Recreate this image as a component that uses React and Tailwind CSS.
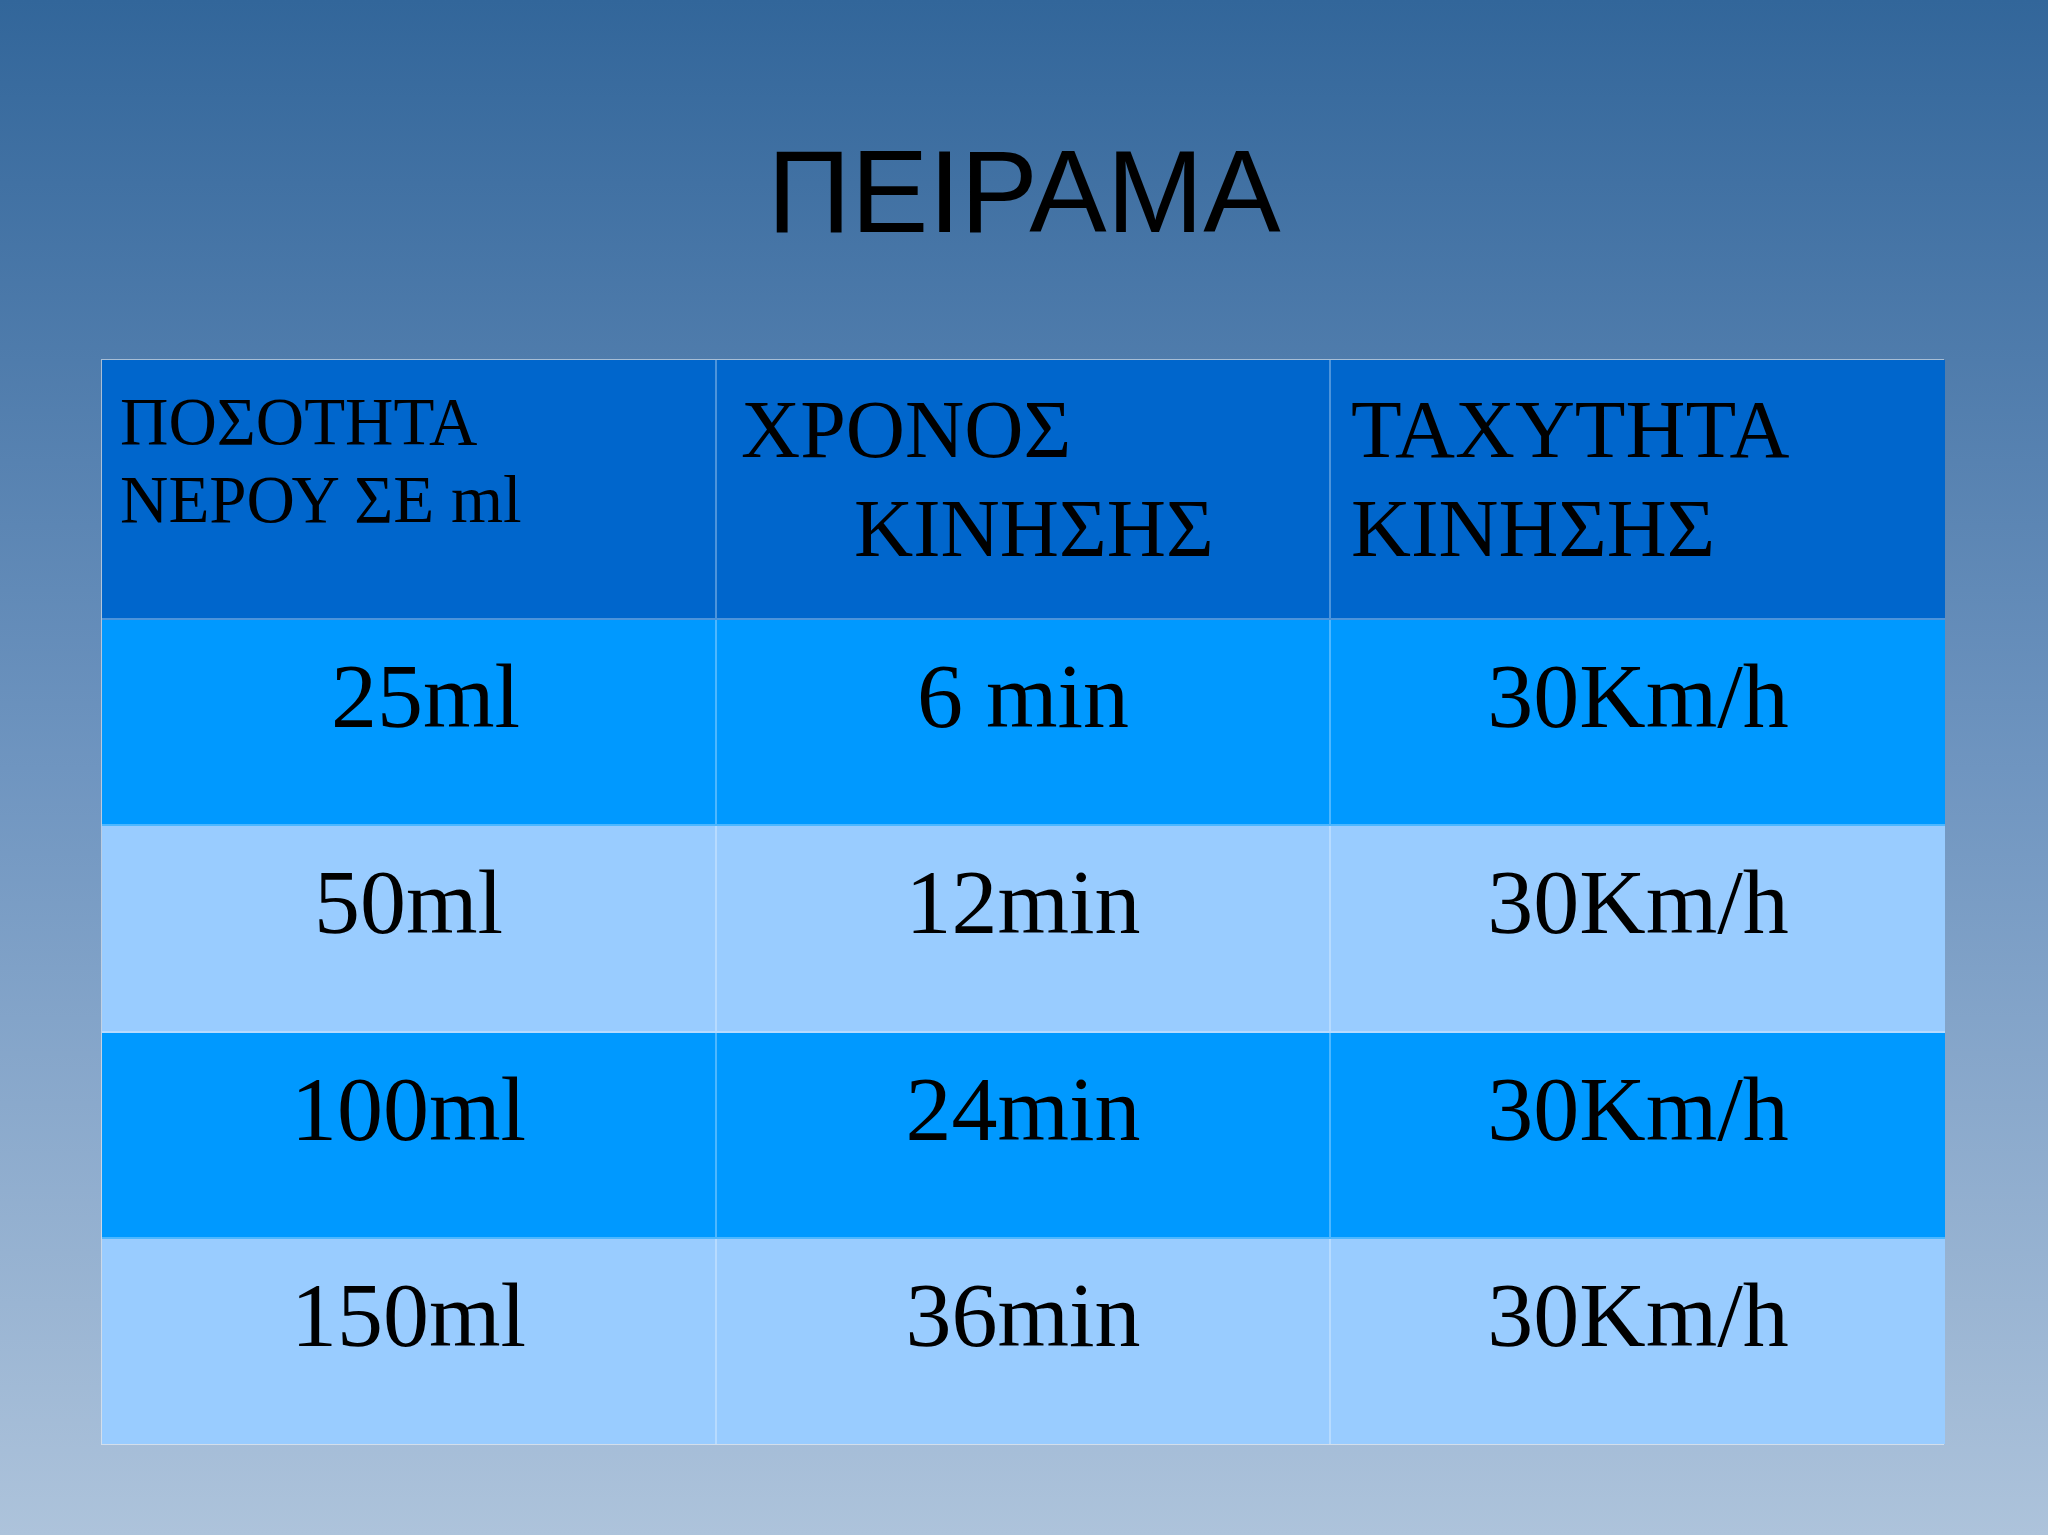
import React from "react";

const rows = [
  { a: "25ml", b: "6 min", c: "30Km/h", bg: "bg-[#0099ff]", shift: true },
  { a: "50ml", b: "12min", c: "30Km/h", bg: "bg-[#99ccff]" },
  { a: "100ml", b: "24min", c: "30Km/h", bg: "bg-[#0099ff]" },
  { a: "150ml", b: "36min", c: "30Km/h", bg: "bg-[#99ccff]" },
];

const serif = { fontFamily: '"Liberation Serif", "Times New Roman", serif' };

export default function App() {
  return (
    <div className="w-[2048px] h-[1535px] bg-gradient-to-b from-[#32669a] via-[#6f95c0] to-[#adc3db] flex flex-col items-center">
      <h1
        className="mt-[134px] text-[116px] leading-[116px] text-black font-normal"
        style={{ fontFamily: '"Liberation Sans", Arial, sans-serif' }}
      >
        ΠΕΙΡΑΜΑ
      </h1>
      <div
        className="mt-[109px] ml-[-3px] w-[1843px] grid grid-cols-[615px_614px_614px] grid-rows-[260px_206px_207px_206px_205px] border border-white/50 text-black"
        style={serif}
      >
        <div className="bg-[#0066cc] border-r-2 border-b-2 border-white/30 pl-[18px] pt-[22px] text-[67px] leading-[78px]">
          <div>ΠΟΣΟΤΗΤΑ</div>
          <div>ΝΕΡΟΥ ΣΕ ml</div>
        </div>
        <div className="bg-[#0066cc] border-r-2 border-b-2 border-white/30 pl-[24px] pt-[20px] text-[82px] leading-[99px]">
          <div>ΧΡΟΝΟΣ</div>
          <div className="pl-[113px]">ΚΙΝΗΣΗΣ</div>
        </div>
        <div className="bg-[#0066cc] border-b-2 border-white/30 pl-[20px] pt-[20px] text-[83px] leading-[99px]">
          <div>ΤΑΧΥΤΗΤΑ</div>
          <div>ΚΙΝΗΣΗΣ</div>
        </div>
        {rows.map((r, i) => (
          <React.Fragment key={i}>
            <div
              className={`${r.bg} border-r-2 border-white/30 ${i < 3 ? "border-b-2" : ""} text-center pt-[26px] text-[92px] leading-[100px] ${r.shift ? "pl-[34px]" : ""}`}
            >
              {r.a}
            </div>
            <div
              className={`${r.bg} border-r-2 border-white/30 ${i < 3 ? "border-b-2" : ""} text-center pt-[26px] text-[92px] leading-[100px]`}
            >
              {r.b}
            </div>
            <div
              className={`${r.bg} border-white/30 ${i < 3 ? "border-b-2" : ""} text-center pt-[26px] text-[92px] leading-[100px]`}
            >
              {r.c}
            </div>
          </React.Fragment>
        ))}
      </div>
    </div>
  );
}
